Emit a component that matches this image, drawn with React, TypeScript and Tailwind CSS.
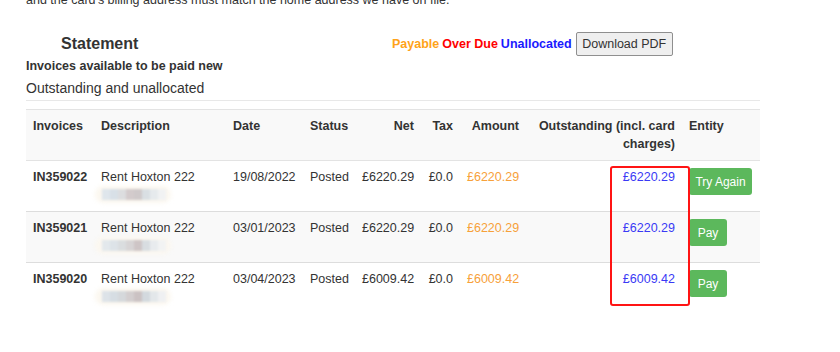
import React from "react";

const font = { fontFamily: '"Liberation Sans", Arial, sans-serif' };

function Blur({ tones }: { tones: string[] }) {
  return (
    <div className="mt-[3px] h-[15px] w-[66px] relative">
      <div className="absolute left-[-6px] top-[-3px] h-[17px] w-[76px] rounded-full bg-[#fbf7ef] blur-[2px]" />
      <div className="absolute left-[1px] top-0 flex h-[11px] blur-[0.8px]">
        {tones.map((c, i) => (
          <div key={i} className="h-[11px] w-[8px]" style={{ backgroundColor: c }} />
        ))}
      </div>
    </div>
  );
}

type Row = {
  inv: string;
  date: string;
  net: string;
  amt: string;
  btn: string;
  w: string;
  bg: string;
  tones: string[];
};

const rows: Row[] = [
  {
    inv: "IN359022",
    date: "19/08/2022",
    net: "£6220.29",
    amt: "£6220.29",
    btn: "Try Again",
    w: "w-[63px]",
    bg: "bg-white",
    tones: ["#dfe6ec", "#d8e0e7", "#dcdddf", "#d3cbcc", "#cfc9ca", "#d9dfe3", "#e6eaed", "#f1f2f3"],
  },
  {
    inv: "IN359021",
    date: "03/01/2023",
    net: "£6220.29",
    amt: "£6220.29",
    btn: "Pay",
    w: "w-[38px]",
    bg: "bg-[#f9f9f9]",
    tones: ["#e3e8ec", "#dde3e8", "#dadddf", "#d7d4d5", "#cec5c6", "#d8dde1", "#e8ebee", "#f2f3f3"],
  },
  {
    inv: "IN359020",
    date: "03/04/2023",
    net: "£6009.42",
    amt: "£6009.42",
    btn: "Pay",
    w: "w-[38px]",
    bg: "bg-white",
    tones: ["#dde3e8", "#d6dde3", "#d5d8db", "#d3cecf", "#cbc2c3", "#d3d9de", "#e3e7ea", "#eff0f2"],
  },
];

export default function App() {
  const th = "px-[7px] pt-[7px] pb-[7px] align-top font-bold leading-[18px]";
  const td = "px-[7px] pt-[7px] pb-[7px] align-top leading-[18px]";
  return (
    <div
      className="relative h-[352px] w-[840px] overflow-hidden bg-white text-[12.5px] text-[#333]"
      style={font}
    >
      <div className="ml-[26px] w-[734px]">
        <div className="mt-[-9px] leading-[18px] whitespace-nowrap text-[#333]">
          and the card's billing address must match the home address we have on file.
        </div>

        <div className="mt-[23px] flex h-[24px] items-center">
          <div className="w-[366px] pl-[35px] text-[16px] font-bold text-[#333]">Statement</div>
          <div className="flex items-center font-bold">
            <span className="text-[#ffa31a]">Payable</span>
            <span className="ml-[3px] text-[#ff0000]">Over Due</span>
            <span className="ml-[3px] text-[#1a1aff]">Unallocated</span>
            <button className="ml-[4px] h-[24px] w-[97px] rounded-[2px] border border-[#8f8f8f] bg-[#efefef] text-[12.5px] font-normal text-[#333]">
              Download PDF
            </button>
          </div>
        </div>

        <div className="mt-[1px] font-bold leading-[18px]">Invoices available to be paid new</div>
        <div className="mt-[3px] text-[14px] leading-[20px]">Outstanding and unallocated</div>
        <div className="mt-[2px] border-t border-[#e8e8e8]" />

        <table className="mt-[8px] w-[734px] table-fixed border-collapse">
          <colgroup>
            <col className="w-[68px]" />
            <col className="w-[132px]" />
            <col className="w-[77px]" />
            <col className="w-[52px]" />
            <col className="w-[66px]" />
            <col className="w-[39px]" />
            <col className="w-[66px]" />
            <col className="w-[156px]" />
            <col className="w-[78px]" />
          </colgroup>
          <thead>
            <tr className="border-t border-b border-[#e3e3e3] bg-[#f9f9f9]">
              <th className={`${th} text-left`}>Invoices</th>
              <th className={`${th} text-left`}>Description</th>
              <th className={`${th} text-left`}>Date</th>
              <th className={`${th} text-left pr-0`}>Status</th>
              <th className={`${th} text-right`}>Net</th>
              <th className={`${th} text-right`}>Tax</th>
              <th className={`${th} text-right`}>Amount</th>
              <th className={`${th} text-right pl-[12px]`}>Outstanding (incl. card charges)</th>
              <th className={`${th} text-left`}>Entity</th>
            </tr>
          </thead>
          <tbody>
            {rows.map((r, i) => (
              <tr key={r.inv} className={`${r.bg} ${i < rows.length - 1 ? "border-b border-[#dddddd]" : ""}`}>
                <td className={`${td} font-bold`}>{r.inv}</td>
                <td className={td}>
                  <div>Rent Hoxton 222</div>
                  <Blur tones={r.tones} />
                </td>
                <td className={td}>{r.date}</td>
                <td className={`${td} pr-0`}>Posted</td>
                <td className={`${td} text-right`}>{r.net}</td>
                <td className={`${td} text-right`}>£0.0</td>
                <td className={`${td} text-right text-[#f7a13a]`}>{r.amt}</td>
                <td className={`${td} text-right text-[#3a3af5]`}>{r.amt}</td>
                <td className={`${td}`}>
                  <button
                    className={`${r.w} h-[27px] whitespace-nowrap rounded-[3px] bg-[#5cb85c] px-0 text-[12px] text-white`}
                  >
                    {r.btn}
                  </button>
                </td>
              </tr>
            ))}
          </tbody>
        </table>
      </div>

      <div className="absolute left-[610px] top-[166px] h-[140px] w-[80px] rounded-[3px] border-2 border-[#ff1414]" />
    </div>
  );
}
